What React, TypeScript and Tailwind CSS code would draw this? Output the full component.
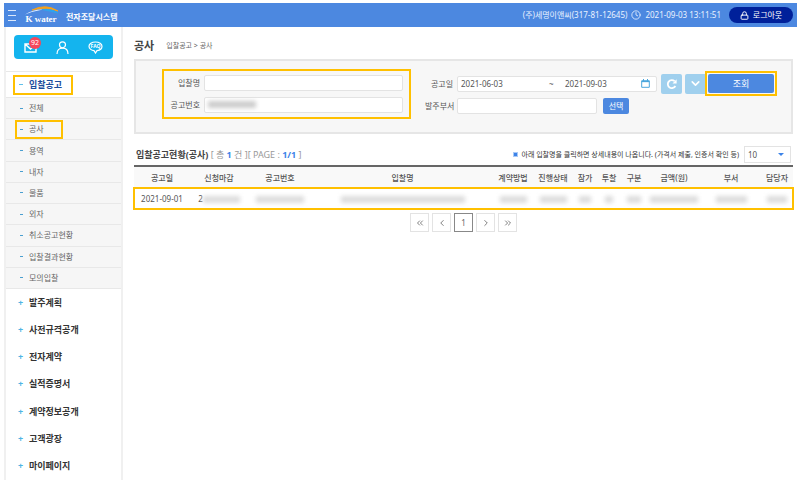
import React from "react";
import { ChevronDown, ChevronLeft, ChevronRight, ChevronsLeft, ChevronsRight, Clock, Lock } from "lucide-react";

const subMenu = ["전체", "공사", "용역", "내자", "물품", "외자", "취소공고현황", "입찰결과현황", "모의입찰"];
const mainMenu = ["발주계획", "사전규격공개", "전자계약", "실적증명서", "계약정보공개", "고객광장", "마이페이지"];

const columns = [
  { name: "공고일", col: "w-[56px]" },
  { name: "신청마감", col: "w-[58px]" },
  { name: "공고번호", col: "w-[64px]" },
  { name: "입찰명", col: "w-auto" },
  { name: "계약방법", col: "w-[40px]" },
  { name: "진행상태", col: "w-[40px]" },
  { name: "참가", col: "w-[24px]" },
  { name: "투찰", col: "w-[24px]" },
  { name: "구분", col: "w-[26px]" },
  { name: "금액(원)", col: "w-[54px]" },
  { name: "부서", col: "w-[60px]" },
  { name: "담당자", col: "w-[32px]" },
];

const masked = ["w-[48px]", "w-[124px]", "w-[27px]", "w-[27px]", "w-[12px]", "w-[8px]", "w-[14px]", "w-[48px]", "w-[31px]"];

function Mask({ width }: { width: string }) {
  return <span className={`inline-block h-[7px] max-w-full bg-[#dddddd] align-middle blur-[2px] ${width}`} />;
}

function Logo() {
  return (
    <svg className="h-[9px] w-[34px]" viewBox="0 0 34 9" aria-hidden="true">
      <path d="M8 4Q22-3 34 5Q22 .5 8 4Z" fill="#f6a21b" stroke="#f6a21b" strokeWidth=".9" />
      <path d="M1 8.5Q10 3 19 3.5Q10 5 1 8.5Z" fill="#e6f1ff" />
      <path d="M18 3.5Q28 2.5 34 7Q26 5 18 3.5Z" fill="#2fa4ee" stroke="#2fa4ee" strokeWidth=".8" />
    </svg>
  );
}

function Header() {
  return (
    <header className="flex h-6 items-center bg-[#4c88e0] pl-1 pr-1 text-[8px] text-white">
      <button aria-label="메뉴" className="flex w-2 flex-col gap-1">
        <span className="h-px w-full bg-[#dbe8fb]" />
        <span className="h-px w-full bg-[#dbe8fb]" />
        <span className="h-px w-full bg-[#dbe8fb]" />
      </button>
      <a href="#" className="ml-2 flex flex-col items-center">
        <Logo />
        <span className="font-['Liberation_Serif',serif] text-[9px] font-bold leading-[9px]">K water</span>
      </a>
      <span className="ml-2 mt-1 font-['Noto_Sans_CJK_KR',sans-serif] font-bold">전자조달시스템</span>
      <div className="ml-auto flex items-center gap-1 whitespace-nowrap text-[#e9f2ff]">
        <span>(주)세명이앤씨(317-81-12645)</span>
        <Clock className="size-[10px]" strokeWidth={2} />
        <time>2021-09-03 13:11:51</time>
      </div>
      <button className="ml-2 flex h-4 w-16 items-center justify-center gap-1 rounded-full bg-[#00209a]">
        <Lock className="size-[9px]" strokeWidth={2.5} />
        로그아웃
      </button>
    </header>
  );
}

function Sidebar() {
  return (
    <aside className="w-[119px] shrink-0 border-x-2 border-[#f0f0f0]">
      <div className="mx-2 mt-2 flex h-6 items-center justify-between rounded-sm bg-[#14b4ee] px-[10px] text-white">
        <button aria-label="쪽지 92" className="relative">
          <svg className="h-[11px] w-[13px]" viewBox="0 0 13 11" fill="none" stroke="currentColor" strokeWidth="1.4">
            <path d="M1 2H12V10H1ZM1 2L6.5 7L12 2" />
          </svg>
          <span className="absolute -top-[5px] left-[5px] flex size-3 items-center justify-center rounded-full bg-[#f5475b] text-[7px] leading-none">92</span>
        </button>
        <button aria-label="내 정보">
          <svg className="h-[13px] w-[13px]" viewBox="0 0 13 13" fill="none" stroke="currentColor" strokeWidth="1.2">
            <circle cx="6.5" cy="3.8" r="3" />
            <path d="M1 13C1 9 3 7.2 6.5 7.2S12 9 12 13" />
          </svg>
        </button>
        <button aria-label="FAQ">
          <svg className="h-[13px] w-[15px]" viewBox="0 0 15 13">
            <path d="M7.5 1C3.8 1 1 2.8 1 5.3S3.8 9.6 6 9.6L7.5 12L9 9.6C12 9.3 14 7.7 14 5.3S11.2 1 7.5 1Z" fill="none" stroke="currentColor" strokeWidth="1.2" />
            <text x="7.5" y="7.3" textAnchor="middle" fontSize="5" fontWeight="700" fill="currentColor">FAQ</text>
          </svg>
        </button>
      </div>
      <nav className="mt-3 border-t border-[#e8e8e8]">
        <div className="flex h-[25px] items-center pl-[7px]">
          <a href="#" className="flex h-5 w-[60px] items-center border-2 border-[#ffc000] pl-1 text-[9px] font-bold text-[#1c4e9c]">
            <span className="mr-[6px] h-px w-1 bg-[#5fc0ea]" />입찰공고
          </a>
        </div>
        <ul className="flex h-[191px] flex-col bg-[#f6f6f6] text-[8px] text-[#666666]">
          {subMenu.map((name) => (
            <li key={name} className="flex flex-1 items-center border-t border-[#e8e8e8] pl-[9px]">
              <a
                href="#"
                className={`flex h-[19px] items-center border-2 pl-[3px] ${name === "공사" ? "w-[48px] border-[#ffc000]" : "border-transparent"}`}
              >
                <span className="mr-[6px] h-px w-[3px] bg-[#4a9fd0]" />
                {name}
              </a>
            </li>
          ))}
        </ul>
        <ul className="flex h-[192px] flex-col border-t border-[#e8e8e8] text-[9px] font-bold text-[#333333]">
          {mainMenu.map((name) => (
            <li key={name} className="flex flex-1 items-center pl-3">
              <a href="#" className="flex items-center">
                <span className="w-[11px] text-[#4fb4e4]">+</span>
                {name}
              </a>
            </li>
          ))}
        </ul>
      </nav>
    </aside>
  );
}

function SearchPanel() {
  const input = "h-4 min-w-0 rounded-xs border border-[#e3e3e3] bg-white px-1";
  return (
    <form className="flex h-[75px] items-start justify-between border-2 border-[#e6e6e6] bg-[#f7f7f7] pl-[26px] pr-[14px] text-[8px] text-[#555555]">
      <div className="mt-2 flex h-[50px] w-[249px] flex-col justify-center gap-[6px] border-2 border-[#ffc000] pr-[6px]">
        <div className="flex items-center gap-1">
          <label htmlFor="bid" className="w-9 text-right">입찰명</label>
          <input id="bid" className={`${input} flex-1`} />
        </div>
        <div className="flex items-center gap-1">
          <label htmlFor="number" className="w-9 text-right">공고번호</label>
          <div className="relative flex flex-1">
            <input id="number" className={`${input} w-full`} />
            <span className="absolute left-1 top-1 h-[7px] w-12 bg-[#cccccc] blur-[2px]" />
          </div>
        </div>
      </div>
      <div className="mt-[10px] flex w-[352px] flex-col gap-[2px]">
        <div className="flex h-[25px] items-center">
          <label htmlFor="from" className="w-7 text-right">공고일</label>
          <div className="ml-1 flex h-4 w-[200px] items-center rounded-xs border border-[#e3e3e3] bg-white pl-[3px] pr-[6px]">
            <input id="from" defaultValue="2021-06-03" className="w-[88px]" />
            <span className="w-4">~</span>
            <input aria-label="종료일" defaultValue="2021-09-03" className="min-w-0 flex-1" />
            <svg className="size-[9px]" viewBox="0 0 9 9" fill="none" stroke="#4aa6dc" aria-hidden="true">
              <path d="M.7 1.8H8.3V8.3H.7Z" />
              <path d="M.7 2.4H8.3" strokeWidth="1.5" />
              <path d="M2.5 0V2M6.5 0V2" />
            </svg>
          </div>
          <button type="button" aria-label="초기화" className="ml-1 flex h-5 w-[21px] items-center justify-center rounded-xs bg-[#a0d0ee] text-white">
            <svg className="size-[10px]" viewBox="0 0 10 10" aria-hidden="true">
              <path d="M8.4 7A4 4 0 1 1 7.6 2.2" fill="none" stroke="currentColor" strokeWidth="1.8" />
              <path d="M9.6 .3V4.4H5.5Z" fill="currentColor" />
            </svg>
          </button>
          <button type="button" aria-label="펼치기" className="ml-[3px] flex h-5 w-5 items-center justify-center rounded-l-xs bg-[#a0d0ee] text-white">
            <ChevronDown className="size-[13px]" strokeWidth={3} />
          </button>
          <div className="flex h-[25px] flex-1 border-2 border-[#ffc000] p-px">
            <button type="button" className="flex-1 rounded-xs bg-[#4c88e0] text-[9px] text-white">조회</button>
          </div>
        </div>
        <div className="flex items-center">
          <label htmlFor="dept" className="w-7 whitespace-nowrap text-right">발주부서</label>
          <input id="dept" className={`${input} ml-1 w-[140px]`} />
          <button type="button" className="ml-[6px] h-4 w-[26px] rounded-xs bg-[#4c88e0] text-white">선택</button>
        </div>
      </div>
    </form>
  );
}

const pageButton = "flex size-[19px] items-center justify-center border";

function Results() {
  return (
    <section className="mt-[10px]">
      <div className="flex h-[21px] items-center justify-between px-[2px]">
        <h2 className="text-[9px] text-[#999999]">
          <b className="text-[#444444]">입찰공고현황(공사)</b> [ 총 <b className="text-[#3c83e8]">1</b> 건 ][ PAGE : <b className="text-[#3c83e8]">1/1</b> ]
        </h2>
        <div className="flex items-center gap-[5px] text-[8px] text-[#555555]">
          <p className="flex items-center gap-[3px] text-[7px] text-[#333333]">
            <span className="size-[5px] border border-[#a9c9f6] bg-[#3c83e8]" />
            아래 입찰명을 클릭하면 상세내용이 나옵니다. (가격서 제출, 인증서 확인 등)
          </p>
          <div className="relative flex">
            <select aria-label="표시 건수" className="h-[17px] w-[47px] appearance-none border border-[#e3e3e3] bg-white pl-[3px]">
              <option>10</option>
            </select>
            <svg className="pointer-events-none absolute right-[7px] top-[7px] h-[3px] w-[6px]" viewBox="0 0 6 3" aria-hidden="true">
              <path d="M0 0H6L3 3Z" fill="#3c83e8" />
            </svg>
          </div>
        </div>
      </div>
      <table className="w-full table-fixed text-center text-[8px] text-[#555555]">
        <colgroup>
          {columns.map((c) => (
            <col key={c.name} className={c.col} />
          ))}
        </colgroup>
        <thead>
          <tr className="h-[22px] border-t-2 border-[#666666] bg-[#f9f9f9]">
            {columns.map((c) => (
              <th key={c.name} scope="col" className="whitespace-nowrap p-0 font-medium">{c.name}</th>
            ))}
          </tr>
        </thead>
        <tbody>
          <tr className="h-[21px] outline-2 -outline-offset-1 outline-[#ffc000]">
            <td className="p-0">2021-09-01</td>
            <td className="whitespace-nowrap p-0">2<Mask width="w-[37px]" /></td>
            {masked.map((width, i) => (
              <td key={i} className="p-0"><Mask width={width} /></td>
            ))}
            <td className="p-0"><Mask width="w-[20px]" /></td>
          </tr>
        </tbody>
      </table>
      <nav aria-label="페이지" className="mt-1 flex justify-center gap-[3px] text-[8px] text-[#666666]">
        <button aria-label="처음" className={`${pageButton} border-[#e3e3e3]`}><ChevronsLeft className="size-[10px]" strokeWidth={2} /></button>
        <button aria-label="이전" className={`${pageButton} border-[#e3e3e3]`}><ChevronLeft className="size-[10px]" strokeWidth={2} /></button>
        <button aria-current="page" className={`${pageButton} border-[#888888]`}>1</button>
        <button aria-label="다음" className={`${pageButton} border-[#e3e3e3]`}><ChevronRight className="size-[10px]" strokeWidth={2} /></button>
        <button aria-label="마지막" className={`${pageButton} border-[#e3e3e3]`}><ChevronsRight className="size-[10px]" strokeWidth={2} /></button>
      </nav>
    </section>
  );
}

export default function App() {
  return (
    <div className="bg-white pl-1 pr-[3px] pt-[3px] font-['Noto_Sans','Noto_Sans_CJK_KR',sans-serif] leading-[12px]">
      <Header />
      <div className="flex">
        <Sidebar />
        <main className="min-w-0 flex-1 pl-[11px] pr-1">
          <div className="flex h-8 items-center gap-3 pt-[5px]">
            <h1 className="text-[11px] font-bold text-[#444444]">공사</h1>
            <span className="text-[7px] text-[#666666]">입찰공고 &gt; 공사</span>
          </div>
          <SearchPanel />
          <Results />
        </main>
      </div>
    </div>
  );
}
